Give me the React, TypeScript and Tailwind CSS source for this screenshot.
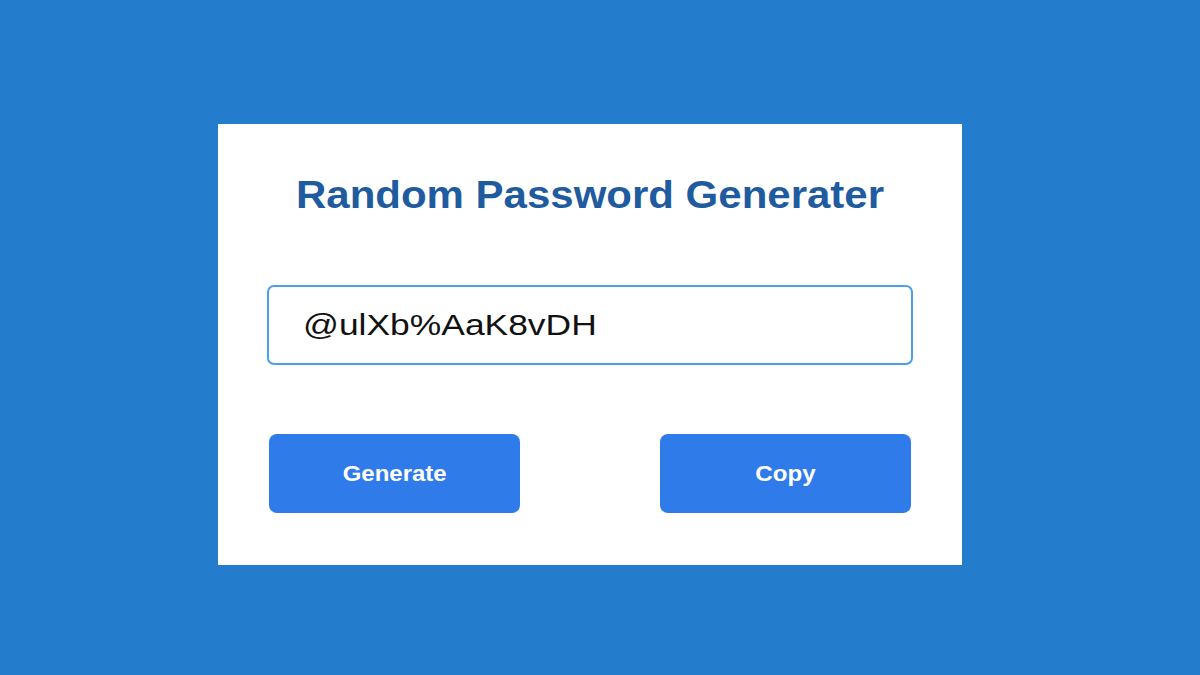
import React from 'react';

const App: React.FC = () => {
    const [password, setPassword] = React.useState('@ulXb%AaK8vDH');

    const generate = () => {
        const chars = 'ABCDEFGHIJKLMNOPQRSTUVWXYZabcdefghijklmnopqrstuvwxyz0123456789@#$%&*';
        let out = '';
        for (let i = 0; i < 13; i++) out += chars[Math.floor(Math.random() * chars.length)];
        setPassword(out);
    };

    return (
        <div className="w-full h-[675px] bg-[#237ccc] flex items-center justify-center pr-[20px] font-['Liberation_Sans',Arial,sans-serif]">
            <div className="w-[744px] h-[441px] bg-white flex flex-col px-[49px] pt-[48px] mb-[-13px]">
                {/* Title */}
                <h1 className="text-center text-[38px] leading-[46px] font-bold text-[#1f5b9f] scale-x-[1.105]">
                    Random Password Generater
                </h1>

                {/* Password field */}
                <div className="mt-[67px] w-full h-[80px] rounded-[7px] border-2 border-[#4aa0ea] px-[34px] flex items-center overflow-hidden">
                    <span className="text-[30px] text-[#111] origin-left scale-x-[1.18] whitespace-nowrap select-all">
                        {password}
                    </span>
                </div>

                {/* Actions */}
                <div className="mt-[69px] flex justify-between px-[2px]">
                    <button
                        onClick={generate}
                        className="w-[251px] h-[79px] rounded-lg bg-[#2f7bea] text-white text-[22px] font-bold"
                    >
                        <span className="inline-block scale-x-[1.09]">Generate</span>
                    </button>
                    <button
                        onClick={() => navigator.clipboard?.writeText(password)}
                        className="w-[251px] h-[79px] rounded-lg bg-[#2f7bea] text-white text-[22px] font-bold"
                    >
                        <span className="inline-block scale-x-[1.1]">Copy</span>
                    </button>
                </div>
            </div>
        </div>
    );
};

export default App;
